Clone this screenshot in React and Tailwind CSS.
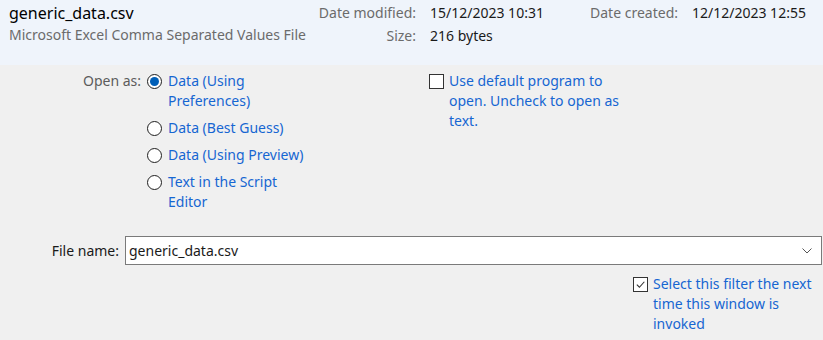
import { useState } from 'react'

const FONT = { fontFamily: '"Noto Sans", "Open Sans", sans-serif' }

function Radio({ checked }) {
  return (
    <span className="mt-[3px] flex h-[15px] w-[15px] shrink-0 items-center justify-center rounded-full border border-[#1f1f1f] bg-white">
      {checked && <span className="h-[9px] w-[9px] rounded-full bg-[#005fb8]" />}
    </span>
  )
}

function Check({ checked }) {
  return (
    <span className="mt-[3px] flex h-[15px] w-[15px] shrink-0 items-center justify-center border border-[#333] bg-white">
      {checked && (
        <svg viewBox="0 0 12 12" className="h-[11px] w-[11px]" fill="none" stroke="#333" strokeWidth="1.2">
          <path d="M2 6.2 L4.8 9 L10.2 3" />
        </svg>
      )}
    </span>
  )
}

const OPTIONS = [
  ['Data (Using', 'Preferences)'],
  ['Data (Best Guess)'],
  ['Data (Using Preview)'],
  ['Text in the Script', 'Editor'],
]

export default function App() {
  const [openAs, setOpenAs] = useState(0)
  const [useDefault, setUseDefault] = useState(false)
  const [remember, setRemember] = useState(true)

  return (
    <div className="h-[340px] w-[823px] overflow-hidden bg-[#f0f0f0] text-[14px] leading-[20px] text-[#1a1a1a]" style={FONT}>
      {/* File details header */}
      <div className="flex h-[65px] items-start bg-[#eff4fb] pl-[9px] pt-[1px]">
        <div className="w-[300px] shrink-0">
          <div className="text-[16px] leading-[24px] text-black">generic_data.csv</div>
          <div className="text-[#6b6b6b]">Microsoft Excel Comma Separated Values File</div>
        </div>
        <div className="grid grid-cols-[107px_127px_107px_auto] content-start gap-x-[14px] whitespace-nowrap pt-[2px]">
          <span className="text-right text-[#6b6b6b]">Date modified:</span>
          <span>15/12/2023 10:31</span>
          <span className="text-right text-[#6b6b6b]">Date created:</span>
          <span>12/12/2023 12:55</span>
          <span className="mt-[3px] text-right text-[#6b6b6b]">Size:</span>
          <span className="mt-[3px]">216 bytes</span>
        </div>
      </div>

      {/* Open as options */}
      <div className="flex pt-[6px]">
        <span className="w-[147px] shrink-0 pr-[6px] text-right text-[#5c5c5c]">Open as:</span>
        <div className="flex w-[276px] shrink-0 flex-col gap-[7px]">
          {OPTIONS.map((lines, i) => (
            <button key={i} onClick={() => setOpenAs(i)} className="flex gap-[6px] text-left text-[#1666d2]">
              <Radio checked={openAs === i} />
              <span>
                {lines.map(l => (
                  <span key={l} className="block">{l}</span>
                ))}
              </span>
            </button>
          ))}
        </div>
        <button onClick={() => setUseDefault(!useDefault)} className="flex h-fit gap-[5px] pl-[6px] text-left text-[#1666d2]">
          <Check checked={useDefault} />
          <span>
            <span className="block">Use default program to</span>
            <span className="block">open. Uncheck to open as</span>
            <span className="block">text.</span>
          </span>
        </button>
      </div>

      {/* File name */}
      <div className="mt-[24px] flex items-center">
        <span className="w-[125px] shrink-0 pr-[6px] text-right">File name:</span>
        <div className="flex h-[29px] w-[697px] items-center justify-between border border-[#7a7a7a] bg-white pl-[3px] pr-[9px]">
          <span>generic_data.csv</span>
          <svg viewBox="0 0 10 6" className="h-[6px] w-[10px]" fill="none" stroke="#555" strokeWidth="1">
            <path d="M0.5 0.5 L5 5 L9.5 0.5" />
          </svg>
        </div>
      </div>

      {/* Remember filter */}
      <div className="mt-[9px] flex pl-[633px]">
        <button onClick={() => setRemember(!remember)} className="flex gap-[5px] text-left text-[#1666d2]">
          <Check checked={remember} />
          <span>
            <span className="block">Select this filter the next</span>
            <span className="block">time this window is</span>
            <span className="block">invoked</span>
          </span>
        </button>
      </div>
    </div>
  )
}
